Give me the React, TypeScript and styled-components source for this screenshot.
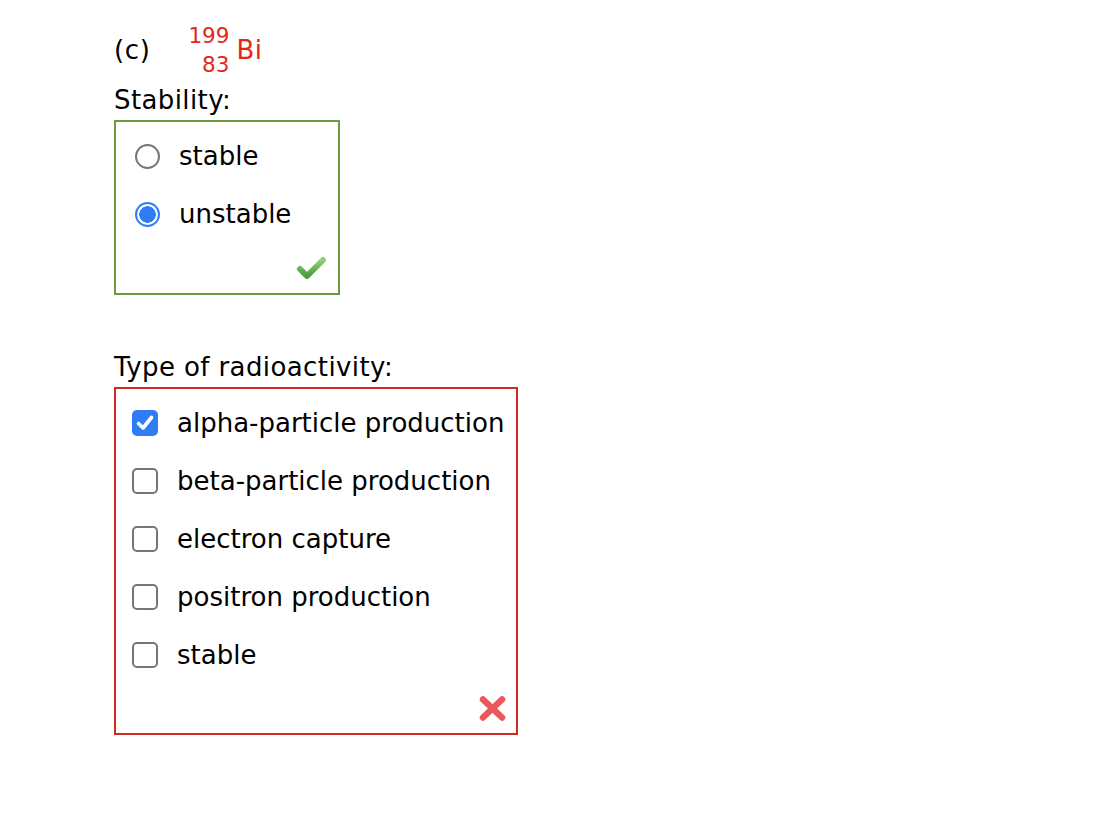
import React from "react";
import styled, { createGlobalStyle } from "styled-components";

const GlobalStyle = createGlobalStyle`
  html, body {
    margin: 0;
    padding: 0;
    background: #ffffff;
  }
  body {
    font-family: "DejaVu Sans", Verdana, sans-serif;
    color: #000000;
  }
`;

const stabilityOptions = [
  { label: "stable", selected: false },
  { label: "unstable", selected: true },
];

const radioactivityOptions = [
  { label: "alpha-particle production", checked: true },
  { label: "beta-particle production", checked: false },
  { label: "electron capture", checked: false },
  { label: "positron production", checked: false },
  { label: "stable", checked: false },
];

export default function App() {
  return (
    <>
      <GlobalStyle />
      <Page>
        <Header>
          <PartLabel>(c)</PartLabel>
          <Nuclide>
            <NumberStack>
              <MassNumber>199</MassNumber>
              <AtomicNumber>83</AtomicNumber>
            </NumberStack>
            <Symbol>Bi</Symbol>
          </Nuclide>
        </Header>

        <QuestionLabel>Stability:</QuestionLabel>
        <AnswerBox status="correct" width={226}>
          {stabilityOptions.map((opt) => (
            <OptionRow key={opt.label}>
              <Radio selected={opt.selected} />
              <OptionText>{opt.label}</OptionText>
            </OptionRow>
          ))}
          <Feedback>
            <CheckMark />
          </Feedback>
        </AnswerBox>

        <QuestionLabel spaced>Type of radioactivity:</QuestionLabel>
        <AnswerBox status="wrong" width={404}>
          {radioactivityOptions.map((opt) => (
            <OptionRow key={opt.label}>
              <Checkbox checked={opt.checked}>
                {opt.checked && (
                  <svg width="22" height="22" viewBox="0 0 22 22">
                    <path
                      d="M4.5 11.5 L9 16 L17.5 5.5"
                      fill="none"
                      stroke="#ffffff"
                      strokeWidth="3.6"
                      strokeLinecap="round"
                      strokeLinejoin="round"
                    />
                  </svg>
                )}
              </Checkbox>
              <OptionText>{opt.label}</OptionText>
            </OptionRow>
          ))}
          <Feedback compact>
            <CrossMark />
          </Feedback>
        </AnswerBox>
      </Page>
    </>
  );
}

const CheckMark = () => (
  <svg width="31" height="26" viewBox="0 0 31 26">
    <defs>
      <linearGradient id="chk" x1="0" y1="0" x2="0" y2="1">
        <stop offset="0" stopColor="#8fd07a" />
        <stop offset="1" stopColor="#4e9a3c" />
      </linearGradient>
    </defs>
    <path
      d="M4 14 L11 21 L27 5"
      fill="none"
      stroke="url(#chk)"
      strokeWidth="6"
      strokeLinecap="round"
      strokeLinejoin="round"
    />
  </svg>
);

const CrossMark = () => (
  <svg width="29" height="27" viewBox="0 0 29 27">
    <path
      d="M5 4.5 L24 22.5 M24 4.5 L5 22.5"
      fill="none"
      stroke="#e9585a"
      strokeWidth="6.5"
      strokeLinecap="round"
    />
  </svg>
);

const Page = styled.div`
  display: flex;
  flex-direction: column;
  align-items: flex-start;
  padding: 20px 0 0 114px;
`;

const Header = styled.div`
  display: flex;
  align-items: center;
  height: 60px;
  gap: 38px;
`;

const PartLabel = styled.span`
  font-size: 26px;
  line-height: 30px;
  letter-spacing: 0.6px;
`;

const Nuclide = styled.div`
  display: flex;
  align-items: center;
  gap: 7px;
  color: #e3261b;
`;

const NumberStack = styled.div`
  display: flex;
  flex-direction: column;
  align-items: flex-end;
  font-size: 21.5px;
`;

const MassNumber = styled.span`
  line-height: 29px;
`;

const AtomicNumber = styled.span`
  line-height: 29px;
`;

const Symbol = styled.span`
  font-size: 26px;
  line-height: 30px;
  letter-spacing: 0.5px;
`;

const QuestionLabel = styled.div<{ spaced?: boolean }>`
  font-size: 26px;
  line-height: 30px;
  letter-spacing: 0.4px;
  margin-top: ${({ spaced }) => (spaced ? "57px" : "5px")};
`;

const AnswerBox = styled.div<{ status: "correct" | "wrong"; width: number }>`
  box-sizing: border-box;
  width: ${({ width }) => width}px;
  margin-top: 5px;
  border: 2px solid
    ${({ status }) => (status === "correct" ? "#6b9b3f" : "#cc2b22")};
  padding: ${({ status }) =>
    status === "correct" ? "5px 11px 0 19px" : "5px 9px 0 16px"};
  display: flex;
  flex-direction: column;
`;

const OptionRow = styled.div`
  display: flex;
  align-items: center;
  height: 58px;
  gap: 19px;
`;

const OptionText = styled.span`
  font-size: 26px;
  line-height: 30px;
  white-space: nowrap;
`;

const Radio = styled.span<{ selected: boolean }>`
  box-sizing: border-box;
  width: 25px;
  height: 25px;
  border-radius: 50%;
  flex-shrink: 0;
  border: 2px solid ${({ selected }) => (selected ? "#2f7cf6" : "#767676")};
  background: ${({ selected }) =>
    selected
      ? "radial-gradient(circle, #2f7cf6 0 8px, #ffffff 8.5px)"
      : "#ffffff"};
`;

const Checkbox = styled.span<{ checked: boolean }>`
  box-sizing: border-box;
  width: 26px;
  height: 26px;
  border-radius: 5px;
  flex-shrink: 0;
  display: flex;
  align-items: center;
  justify-content: center;
  border: 2px solid ${({ checked }) => (checked ? "#2f7cf6" : "#767676")};
  background: ${({ checked }) => (checked ? "#2f7cf6" : "#ffffff")};
`;

const Feedback = styled.div<{ compact?: boolean }>`
  display: flex;
  align-items: center;
  justify-content: flex-end;
  height: ${({ compact }) => (compact ? "49px" : "50px")};
`;
